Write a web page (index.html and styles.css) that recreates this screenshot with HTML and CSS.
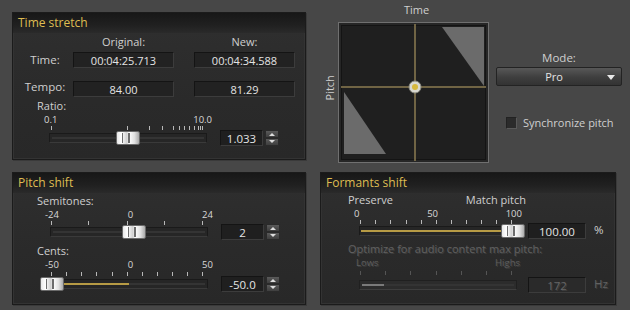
FILE: index.html
```html
<!DOCTYPE html>
<html lang="en">
  <head>
    <meta charset="UTF-8" />
    <title>Time stretch</title>
    <link rel="stylesheet" href="styles.css">
  </head>
  <body>
    <div class="app">
      <!-- time stretch -->
      <section class="panel stretch">
        <h2 class="title">Time stretch</h2>
        <div class="times">
          <span></span>
          <span class="head">Original:</span>
          <span class="head">New:</span>
          <span class="lbl">Time:</span>
          <span class="field">00:04:25.713</span>
          <span class="field">00:04:34.588</span>
          <span class="lbl">Tempo:</span>
          <span class="field">84.00</span>
          <span class="field">81.29</span>
        </div>
        <div class="ctl ratio">
          <div class="ctl-label">Ratio:</div>
          <div class="ctl-row">
            <div class="slider">
              <div class="scale"><span>0.1</span><span>10.0</span></div>
              <svg class="ticks" width="158" height="4">
                <g fill="#b8b8b8">
                  <rect x="2" width="1" height="4"/><rect x="78" width="1" height="4"/><rect x="100" width="1" height="4"/>
                  <rect x="113" width="1" height="4"/><rect x="124" width="1" height="4"/><rect x="130" width="1" height="4"/>
                  <rect x="135" width="1" height="4"/><rect x="140" width="1" height="4"/><rect x="145" width="1" height="4"/>
                  <rect x="149" width="1" height="4"/><rect x="151" width="1" height="4"/><rect x="153" width="1" height="4"/>
                </g>
              </svg>
              <div class="track"><span class="thumb" style="left: 66px"></span></div>
            </div>
            <span class="num">1.033</span>
            <span class="spin"><i class="up"></i><i class="down"></i></span>
          </div>
        </div>
      </section>

      <!-- xy pad + mode -->
      <div class="side">
        <div class="pad-block">
          <div class="pad-time">Time</div>
          <div class="pad-row">
            <span class="pad-pitch">Pitch</span>
            <svg class="pad" width="151" height="141" viewBox="0 0 151 141">
              <rect x="0.5" y="0.5" width="150" height="140" fill="#262626" stroke="#707070"/>
              <rect x="3.5" y="3.5" width="144" height="134" fill="#1f1f1f" stroke="#141414"/>
              <polygon points="104,5 146,5 146,64" fill="#6b6b6b"/>
              <polygon points="6,70 6,132 48,132" fill="#6b6b6b"/>
              <line x1="77" y1="2" x2="77" y2="139" stroke="#8c7c52" stroke-width="1.5"/>
              <line x1="3" y1="65" x2="148" y2="65" stroke="#8c7c52" stroke-width="1.5"/>
              <circle cx="77" cy="65" r="6" fill="#d8d8d0" stroke="#8a8a80"/>
              <circle cx="77" cy="65" r="3" fill="#d6b83c"/>
            </svg>
          </div>
        </div>
        <div class="mode">
          <div class="mode-label">Mode:</div>
          <div class="select">Pro<i class="arrow"></i></div>
          <label class="check"><span class="box"></span>Synchronize pitch</label>
        </div>
      </div>

      <!-- pitch shift -->
      <section class="panel pitch">
        <h2 class="title">Pitch shift</h2>
        <div class="ctl semi">
          <div class="ctl-label">Semitones:</div>
          <div class="ctl-row">
            <div class="slider">
              <div class="scale"><span>-24</span><span>0</span><span>24</span></div>
              <svg class="ticks" width="158" height="4">
                <g fill="#b8b8b8">
                  <rect x="1" width="1" height="4"/><rect x="38" width="1" height="4"/><rect x="77" width="1" height="4"/>
                  <rect x="114" width="1" height="4"/><rect x="152" width="1" height="4"/>
                </g>
              </svg>
              <div class="track"><span class="thumb" style="left: 71px"></span></div>
            </div>
            <span class="num">2</span>
            <span class="spin"><i class="up"></i><i class="down"></i></span>
          </div>
        </div>
        <div class="ctl cents">
          <div class="ctl-label">Cents:</div>
          <div class="ctl-row">
            <div class="slider">
              <div class="scale"><span>-50</span><span>0</span><span>50</span></div>
              <svg class="ticks" width="158" height="4">
                <g fill="#b8b8b8">
                  <rect x="1" width="1" height="4"/><rect x="16" width="1" height="4"/><rect x="31" width="1" height="4"/>
                  <rect x="46" width="1" height="4"/><rect x="62" width="1" height="4"/><rect x="77" width="1" height="4"/>
                  <rect x="92" width="1" height="4"/><rect x="107" width="1" height="4"/><rect x="122" width="1" height="4"/>
                  <rect x="137" width="1" height="4"/><rect x="152" width="1" height="4"/>
                </g>
              </svg>
              <div class="track"><span class="fill" style="left: 12px; width: 66px"></span><span class="thumb" style="left: -11px"></span></div>
            </div>
            <span class="num">-50.0</span>
            <span class="spin"><i class="up"></i><i class="down"></i></span>
          </div>
        </div>
      </section>

      <!-- formants shift -->
      <section class="panel formants">
        <h2 class="title">Formants shift</h2>
        <div class="ctl fmt">
          <div class="ends"><span>Preserve</span><span>Match pitch</span></div>
          <div class="ctl-row">
            <div class="slider">
              <div class="scale"><span>0</span><span>50</span><span>100</span></div>
              <svg class="ticks" width="158" height="4">
                <g fill="#b8b8b8">
                  <rect x="1" width="1" height="4"/><rect x="16" width="1" height="4"/><rect x="31" width="1" height="4"/>
                  <rect x="47" width="1" height="4"/><rect x="62" width="1" height="4"/><rect x="77" width="1" height="4"/>
                  <rect x="92" width="1" height="4"/><rect x="107" width="1" height="4"/><rect x="122" width="1" height="4"/>
                  <rect x="137" width="1" height="4"/><rect x="152" width="1" height="4"/>
                </g>
              </svg>
              <div class="track"><span class="fill" style="left: 1px; width: 140px"></span><span class="thumb" style="left: 141px"></span></div>
            </div>
            <span class="num wide">100.00</span>
            <span class="unit">%</span>
          </div>
        </div>
        <div class="ctl fmt off">
          <div class="ctl-label">Optimize for audio content max pitch:</div>
          <div class="ctl-row">
            <div class="slider">
              <div class="scale"><span>Lows</span><span>Highs</span></div>
              <svg class="ticks" width="158" height="4">
                <g fill="#555">
                  <rect x="1" width="1" height="4"/><rect x="26" width="1" height="4"/><rect x="51" width="1" height="4"/>
                  <rect x="77" width="1" height="4"/><rect x="102" width="1" height="4"/><rect x="127" width="1" height="4"/>
                  <rect x="152" width="1" height="4"/>
                </g>
              </svg>
              <div class="track"><span class="fill dim" style="left: 2px; width: 22px"></span></div>
            </div>
            <span class="num wide">172</span>
            <span class="unit">Hz</span>
          </div>
        </div>
      </section>
    </div>
  </body>
</html>
```
FILE: styles.css
```css
* {
  box-sizing: border-box;
}
body {
  margin: 0;
  background: #474747;
  font-family: "Open Sans", "DejaVu Sans", sans-serif;
  font-size: 11px;
  color: #cfcfcf;
}

.app {
  display: grid;
  grid-template-columns: 294px 310px;
  grid-template-rows: 160px 145px;
  column-gap: 14px;
  padding-left: 12px;
  width: 630px;
  height: 310px;
  overflow: hidden;
}

.panel {
  margin-top: 12px;
  background: linear-gradient(#2f2f2f, #2a2a2a 60%, #282828);
  border: 1px solid #1b1b1b;
  box-shadow: 1px 1px 0 #3a3a3a, inset 0 0 0 1px #333;
}
.stretch {
  height: 148px;
}
.pitch,
.formants {
  height: 133px;
}
.formants {
  width: 296px;
}
.title {
  margin: 0;
  height: 20px;
  padding-left: 5px;
  font-size: 12px;
  font-weight: normal;
  line-height: 20px;
  color: #dfbd52;
  background: linear-gradient(#171717, #202020 60%, #2a2a2a);
}

/* time / tempo */
.times {
  display: grid;
  grid-template-columns: 46px 116px 101px;
  column-gap: 5px;
  padding: 2px 0 0 9px;
  line-height: 14px;
  align-items: center;
}
.head {
  width: 101px;
  text-align: center;
  margin-bottom: 3px;
}
.lbl {
  text-align: center;
  font-size: 11.5px;
}
.field {
  width: 101px;
  height: 16px;
  line-height: 15px;
  text-align: center;
  color: #e4e4e4;
  background: #222;
  border: 1px solid #141414;
  border-right-color: #3c3c3c;
  border-bottom-color: #3c3c3c;
}
.times .field:nth-child(n+7) {
  margin-top: 13px;
}
.times .lbl:nth-child(7) {
  margin-top: 8px;
}

/* slider controls */
.ctl-label {
  line-height: 14px;
  padding-left: 24px;
}
.ctl-row {
  display: flex;
  align-items: flex-end;
  padding-left: 36px;
}
.slider {
  width: 158px;
  margin-right: 13px;
}
.scale {
  display: flex;
  justify-content: space-between;
  margin: 0 -5px;
  padding-top: 2px;
  font-size: 9.5px;
  line-height: 10px;
  color: #d8d8d8;
}
.ticks {
  display: block;
  margin: 2px 0 3px;
}
.track {
  position: relative;
  height: 10px;
  background: #262626;
  border: 1px solid #1a1a1a;
  border-bottom-color: #3a3a3a;
}
.track::before {
  content: "";
  position: absolute;
  left: 2px;
  right: 2px;
  top: 3px;
  height: 2px;
  background: #343434;
}
.fill {
  position: absolute;
  top: 3px;
  height: 2px;
  background: #b79b45;
}
.fill.dim {
  background: #7a7a7a;
}
.thumb {
  position: absolute;
  top: -3px;
  width: 24px;
  height: 14px;
  border: 1px solid #6a6a6a;
  border-radius: 2px;
  background: linear-gradient(90deg, #e8e8e8, #fff 20%, #cfcfcf 45%, #fff 55%, #e0e0e0 80%, #aaa);
}
.thumb::before,
.thumb::after {
  content: "";
  position: absolute;
  top: 1px;
  bottom: 1px;
  width: 1px;
  background: #6c6c6c;
}
.thumb::before {
  left: 5px;
}
.thumb::after {
  left: 11px;
  width: 2px;
}
.num {
  width: 43px;
  height: 16px;
  margin-bottom: -3px;
  line-height: 15px;
  text-align: center;
  color: #e4e4e4;
  background: #1f1f1f;
  border: 1px solid #141414;
  border-right-color: #3c3c3c;
  border-bottom-color: #3c3c3c;
  font-size: 11.5px;
}
.num.wide {
  width: 58px;
  margin-left: -1px;
}
.spin {
  display: flex;
  flex-direction: column;
  width: 14px;
  height: 16px;
  margin: 0 0 -3px 2px;
}
.spin i {
  flex: 1;
  position: relative;
  background: linear-gradient(#5a5a5a, #3e3e3e);
  border: 1px solid #2a2a2a;
}
.spin i::after {
  content: "";
  position: absolute;
  left: 3px;
  top: 2px;
  border-left: 3px solid transparent;
  border-right: 3px solid transparent;
}
.spin .up::after {
  border-bottom: 3px solid #ddd;
}
.spin .down::after {
  top: 1px;
  border-top: 3px solid #ddd;
}
.unit {
  margin: 0 0 -1px 8px;
  font-size: 11.5px;
  line-height: 14px;
}

.ratio {
  margin-top: 2px;
}
.ratio .ticks {
  margin: 1px 0 3px;
}
.semi {
  padding-top: 1px;
}
.semi .ticks {
  margin: 1px 0 2px;
}
.semi .ctl-row,
.cents .ctl-row {
  padding-left: 37px;
}
.cents {
  margin-top: 7px;
}

/* formants */
.fmt .ctl-row {
  padding-left: 38px;
}
.ends {
  display: flex;
  justify-content: space-between;
  width: 178px;
  margin-left: 27px;
  line-height: 14px;
}
.fmt .ticks {
  margin: 1px 0 2px;
}
.fmt .slider {
  margin-right: 12px;
}
.off {
  margin-top: 6px;
  color: #616161;
  text-shadow: 1px 1px 0 #3f3f3f;
}
.off .ticks {
  margin: 3px 0 5px;
}
.off .ctl-label {
  padding-left: 27px;
}
.off .scale {
  color: #5e5e5e;
  margin: 0 -3px;
}
.off .track {
  background: #2c2c2c;
  border-color: #202020 #202020 #3e3e3e;
}
.off .num {
  color: #666;
  background: #2a2a2a;
}

/* pad + mode */
.side {
  display: flex;
}
.pad-block {
  width: 176px;
}
.pad-time {
  padding-left: 84px;
  line-height: 14px;
  margin-top: 3px;
  margin-bottom: 5px;
}
.pad-row {
  display: flex;
  align-items: center;
}
.pad-pitch {
  width: 18px;
  transform: rotate(-90deg);
  display: block;
  text-align: center;
  margin-top: -2px;
}
.pad {
  display: block;
}
.mode {
  padding-top: 51px;
  width: 126px;
}
.mode-label {
  text-align: center;
  line-height: 14px;
  margin-bottom: 2px;
  font-size: 11.5px;
}
.select {
  position: relative;
  height: 19px;
  line-height: 18px;
  padding-right: 10px;
  text-align: center;
  color: #e4e4e4;
  background: linear-gradient(#585858, #3e3e3e 55%, #333);
  border: 1px solid #232323;
  border-radius: 2px;
}
.arrow {
  position: absolute;
  right: 6px;
  top: 7px;
  border-left: 4px solid transparent;
  border-right: 4px solid transparent;
  border-top: 5px solid #e8e8e8;
}
.check {
  display: flex;
  align-items: center;
  gap: 6px;
  margin: 29px 0 0 10px;
  white-space: nowrap;
}
.box {
  width: 11px;
  height: 12px;
  background: #2b2b2b;
  border: 1px solid #222;
  border-right-color: #5a5a5a;
  border-bottom-color: #5a5a5a;
}
```
